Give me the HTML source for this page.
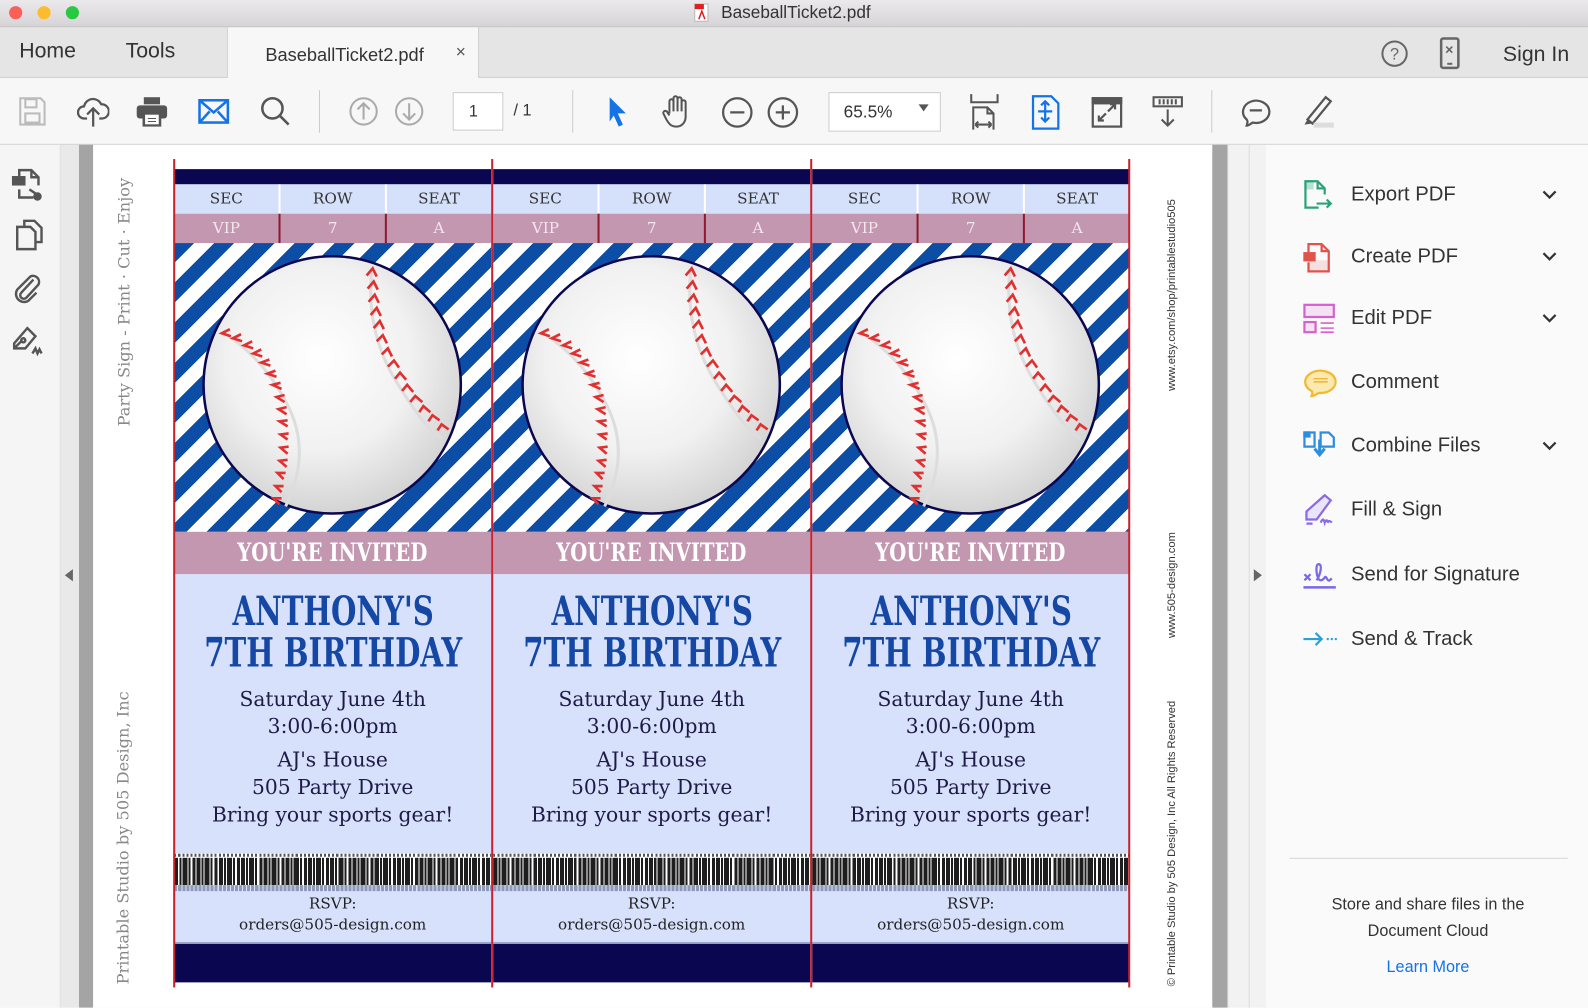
<!DOCTYPE html>
<html><head><meta charset="utf-8"><style>
*{margin:0;padding:0;box-sizing:border-box}
html,body{width:1588px;height:1008px;overflow:hidden;background:#fafafa}
#w{position:absolute;left:0;top:0;width:1568px;height:995px;transform:scale(1.01276);transform-origin:0 0;font-family:"Liberation Sans",sans-serif;overflow:hidden}
.a{position:absolute}
.title{left:0;top:0;width:1568px;height:27px;background:linear-gradient(#ebe9eb,#d6d4d6);border-bottom:1px solid #bdbdbd}
.dot{width:13px;height:13px;border-radius:50%;top:6px}
.tabs{left:0;top:27px;width:1568px;height:50px;background:#e5e5e5;border-bottom:1px solid #cfcfcf}
.tb{left:0;top:77px;width:1568px;height:66px;background:#f7f7f7;border-bottom:1px solid #d0d0d0}
.ic{position:absolute}
.side{left:0;top:143px;width:60px;height:852px;background:#f5f5f5;border-right:1px solid #ddd}
.page{left:92px;top:143px;width:1105px;height:852px;background:#fff}
.tk{position:absolute;top:167px;width:313px}
.navy{background:#0b0650}
.hdr{display:flex;height:29px;background:#d5e0fb;font-family:"DejaVu Serif","Liberation Serif",serif;font-size:15px;color:#333}
.hdr div,.val div{flex:1;text-align:center;line-height:29px}
.hdr div+div{border-left:2px solid #fff}
.val{display:flex;height:29px;background:#c497b0;font-family:"DejaVu Serif",serif;font-size:15px;color:#f3e6ee}
.val div+div{border-left:2px solid #8d1b2e}
.str{height:285px;background:repeating-linear-gradient(135deg,#0c4ea6 0 14px,#fff 14px 28px);position:relative;overflow:hidden}
.inv{height:42px;background:#c497b0;color:#fff;text-align:center;font-family:"DejaVu Serif Condensed","DejaVu Serif",serif;font-weight:bold;font-size:25px;line-height:42px;white-space:nowrap}
.inv span{display:inline-block;transform:scaleX(.86)}
.body{height:276px;background:#d7e1fb;text-align:center;color:#1e1a48;font-family:"DejaVu Serif","Liberation Serif",serif;overflow:hidden}
.h1{font-family:"DejaVu Serif Condensed","DejaVu Serif",serif;font-weight:bold;color:#1547a5;font-size:40px;line-height:41px;padding-top:16px;width:440px;margin-left:-63px;white-space:nowrap;transform:scaleX(.8)}
.t{font-size:20px;line-height:27px;white-space:nowrap}
.bar{height:37px;background:#fff;position:relative}
.rs{height:52px;background:#d7e1fb;text-align:center;font-family:"DejaVu Serif",serif;font-size:15px;color:#222;line-height:21px;padding-top:2px;border-bottom:2px solid #9da8cf}
.rl{position:absolute;top:157px;width:2px;height:818px;background:#c8202c}
.vt{position:absolute;white-space:nowrap;transform-origin:0 0;transform:rotate(-90deg);font-family:"DejaVu Serif",serif;color:#888;font-size:16px}
.vs{position:absolute;white-space:nowrap;transform-origin:0 0;transform:rotate(-90deg);font-family:"Liberation Sans",sans-serif;color:#333;font-size:11px}
.rp{left:1250px;top:143px;width:318px;height:852px;background:#fafafa}
.it{position:absolute;left:84px;font-size:20px;color:#333}
.chev{position:absolute;left:272px}
.bc{position:absolute;left:0;top:4px;width:313px;height:27px;background:repeating-linear-gradient(90deg,#1e1e1e 0 4px,#fff 4px 5px,#1e1e1e 5px 7px,#fff 7px 8px,#1e1e1e 8px 13px,#fff 13px 14px,#1e1e1e 14px 16px,#fff 16px 18px,#1e1e1e 18px 21px,#fff 21px 22px)}
</style></head><body><div id="w">
<div class="a title">
<div class="a dot" style="left:9px;background:#fc5f57"></div>
<div class="a dot" style="left:37px;background:#fdbc2e"></div>
<div class="a dot" style="left:65px;background:#28c840"></div>
<svg class="a" style="left:684px;top:3px" width="18" height="20"><rect x="2" y="1" width="13" height="17" fill="#fff" stroke="#bbb"/><rect x="2" y="1" width="9" height="5" fill="#e02020"/><path d="M6 16 L9 8 L12 16" stroke="#e02020" fill="none" stroke-width="1.5"/></svg>
<div class="a" style="left:712px;top:3px;font-size:17px;color:#333">BaseballTicket2.pdf</div>
</div>
<div class="a tabs">
<div class="a" style="left:19px;top:12px;font-size:21px;color:#333">Home</div>
<div class="a" style="left:124px;top:12px;font-size:21px;color:#333">Tools</div>
<div class="a" style="left:224px;top:0;width:249px;height:51px;background:#f7f7f7;border-left:1px solid #d0d0d0;border-right:1px solid #d0d0d0"></div>
<div class="a" style="left:262px;top:17px;font-size:18px;color:#333">BaseballTicket2.pdf</div>
<div class="a" style="left:450px;top:15px;font-size:17px;color:#555">×</div>
<svg class="a" style="left:1363px;top:12px" width="28" height="28"><circle cx="14" cy="14" r="12" fill="none" stroke="#666" stroke-width="2"/><text x="14" y="20" text-anchor="middle" font-size="16" fill="#666" font-family="Liberation Sans">?</text></svg>
<svg class="a" style="left:1421px;top:9px" width="22" height="34"><rect x="2" y="2" width="17" height="29" rx="2" fill="none" stroke="#666" stroke-width="2.5"/><path d="M7 10l6 6M13 10l-6 6" stroke="#666" stroke-width="1.6"/><rect x="8" y="26" width="5" height="2" fill="#666"/></svg>
<div class="a" style="left:1484px;top:15px;font-size:21px;color:#333">Sign In</div>
</div>
<div class="a tb">
<svg class="ic" style="left:18px;top:18px" width="28" height="30"><path d="M2 2h20l4 4v22H2z" fill="none" stroke="#bbb" stroke-width="2"/><rect x="7" y="3" width="11" height="8" fill="none" stroke="#bbb" stroke-width="2"/><rect x="7" y="17" width="14" height="9" fill="none" stroke="#bbb" stroke-width="2"/></svg>
<svg class="ic" style="left:76px;top:16px" width="32" height="34" fill="none" stroke="#555" stroke-width="2.2"><path d="M10 24H7a6 6 0 0 1 0-12 9 9 0 0 1 17-2 7 7 0 0 1 1 14h-3"/><path d="M16 32V15M10 20l6-6 6 6"/></svg>
<svg class="ic" style="left:134px;top:18px" width="32" height="30"><rect x="8" y="1" width="16" height="7" fill="#555"/><rect x="1" y="9" width="30" height="13" rx="3" fill="#555"/><rect x="8" y="17" width="16" height="12" fill="#fff" stroke="#555" stroke-width="2.5"/><path d="M12 22h8M12 25h8" stroke="#555"/></svg>
<svg class="ic" style="left:195px;top:20px" width="32" height="26" fill="none" stroke="#1473e6" stroke-width="2.5"><rect x="2" y="2" width="28" height="22"/><path d="M2 2l14 12 14-12M2 24l10-11M30 24l-10-11"/></svg>
<svg class="ic" style="left:256px;top:17px" width="32" height="32" fill="none" stroke="#555" stroke-width="2.5"><circle cx="13" cy="13" r="10"/><path d="M20 20l9 9"/></svg>
<div class="a" style="left:315px;top:12px;width:1px;height:42px;background:#ccc"></div>
<svg class="ic" style="left:344px;top:18px" width="30" height="30" fill="none" stroke="#aaa" stroke-width="2"><circle cx="15" cy="15" r="13"/><path d="M15 23V8M9 13l6-6 6 6"/></svg>
<svg class="ic" style="left:389px;top:18px" width="30" height="30" fill="none" stroke="#aaa" stroke-width="2"><circle cx="15" cy="15" r="13"/><path d="M15 7v15M9 17l6 6 6-6"/></svg>
<div class="a" style="left:447px;top:14px;width:50px;height:38px;background:#fff;border:1px solid #ccc;font-size:16px;color:#333;padding:10px 0 0 15px">1</div>
<div class="a" style="left:507px;top:24px;font-size:16px;color:#333">/ 1</div>
<div class="a" style="left:565px;top:12px;width:1px;height:42px;background:#ccc"></div>
<svg class="ic" style="left:598px;top:17px" width="24" height="32"><path d="M4 2l16 16h-8l5 11-4 2-5-11-4 6z" fill="#1473e6"/></svg>
<svg class="ic" style="left:652px;top:15px" width="34" height="36" fill="none" stroke="#555" stroke-width="2"><path d="M9 20V8a2 2 0 0 1 4 0v10V5a2 2 0 0 1 4 0v13V6a2 2 0 0 1 4 0v12V9a2 2 0 0 1 4 0v14c0 6-4 10-9 10s-7-2-10-7l-3-6a2 2 0 0 1 4-1l2 3"/></svg>
<svg class="ic" style="left:712px;top:18px" width="32" height="32" fill="none" stroke="#555" stroke-width="2.2"><circle cx="16" cy="16" r="14"/><path d="M9 16h14"/></svg>
<svg class="ic" style="left:757px;top:18px" width="32" height="32" fill="none" stroke="#555" stroke-width="2.2"><circle cx="16" cy="16" r="14"/><path d="M9 16h14M16 9v14"/></svg>
<div class="a" style="left:818px;top:14px;width:111px;height:39px;background:#fff;border:1px solid #ccc;font-size:17px;color:#333;padding:9px 0 0 14px">65.5%</div>
<div class="a" style="left:907px;top:26px;width:0;height:0;border-left:5px solid transparent;border-right:5px solid transparent;border-top:7px solid #555"></div>
<svg class="ic" style="left:957px;top:15px" width="30" height="38" fill="none" stroke="#555" stroke-width="2"><path d="M2 1v8h26V1M4 36V14h14l6 6v16M18 14v6h6M6 31h16M6 31l3-3M6 31l3 3M22 31l-3-3M22 31l-3 3"/></svg>
<svg class="ic" style="left:1018px;top:16px" width="30" height="36" fill="none" stroke="#1473e6" stroke-width="2.2"><path d="M2 2h18l7 7v25H2z"/><path d="M14 7v20M10 11l4-4 4 4M10 23l4 4 4-4M7 17h14"/></svg>
<svg class="ic" style="left:1077px;top:18px" width="32" height="32" fill="none" stroke="#555" stroke-width="2.2"><rect x="2" y="2" width="28" height="28"/><rect x="2" y="2" width="28" height="5" fill="#555"/><path d="M17 15l7-7M19 8h5v5M15 17l-7 7M8 19v5h5"/></svg>
<svg class="ic" style="left:1137px;top:17px" width="32" height="34" fill="none" stroke="#555" stroke-width="2"><rect x="2" y="2" width="28" height="9"/><path d="M8 4v5M12 4v5M16 4v5M20 4v5M24 4v5M16 14v16M10 24l6 6 6-6"/></svg>
<div class="a" style="left:1196px;top:12px;width:1px;height:42px;background:#ccc"></div>
<svg class="ic" style="left:1223px;top:17px" width="34" height="34" fill="none" stroke="#555" stroke-width="2.2"><path d="M8 30c1-3 1-5 0-6A13 11 0 1 1 14 27c-2 1-4 3-6 3z"/><path d="M11 15h12"/></svg>
<svg class="ic" style="left:1283px;top:15px" width="36" height="36"><path d="M8 26L26 4l5 4-18 22z" fill="none" stroke="#555" stroke-width="2.2"/><path d="M5 31l3-5 5 4z" fill="#555"/><rect x="14" y="29" width="20" height="5" fill="#ddd"/></svg>
</div>
<div class="a side">
<svg class="ic" style="left:11px;top:22px" width="32" height="34" fill="none" stroke="#555" stroke-width="2.4"><path d="M8 10V3h12l7 7v8M8 22v8h14"/><rect x="2" y="10" width="11" height="7" fill="#555"/><path d="M20 3v7h7M18 22l6 4"/><circle cx="26" cy="29" r="3" fill="#555"/></svg>
<svg class="ic" style="left:15px;top:73px" width="28" height="32" fill="none" stroke="#555" stroke-width="2.4"><path d="M9 7V2h10l7 7v14h-6"/><path d="M2 8h13l5 5v17H2z"/></svg>
<svg class="ic" style="left:12px;top:123px" width="30" height="34" fill="none" stroke="#555" stroke-width="2.4"><path d="M21 10L9 23a3.5 3.5 0 0 0 5 5L26 15a6 6 0 0 0-8-8L5 20a8 8 0 0 0 11 11l8-8"/></svg>
<svg class="ic" style="left:10px;top:176px" width="36" height="34" fill="none" stroke="#555" stroke-width="2.4"><path d="M17 5l8 8-10 12H4v-5z"/><path d="M4 25l8-8"/><circle cx="13" cy="17" r="2"/><path d="M22 30l3-5 2 5 2-4 2 4"/></svg>
</div>
<div class="a" style="left:60px;top:143px;width:18px;height:852px;background:#e9e9e9"></div>
<div class="a" style="left:64px;top:562px;width:0;height:0;border-top:6px solid transparent;border-bottom:6px solid transparent;border-right:8px solid #666"></div>
<div class="a" style="left:78px;top:143px;width:14px;height:852px;background:#a4a4a4"></div>
<div class="a page"></div>
<div class="a" style="left:1197px;top:143px;width:15px;height:852px;background:#a4a4a4"></div>
<div class="a" style="left:1212px;top:143px;width:38px;height:852px;background:#f2f2f2;border-left:1px solid #e0e0e0"></div>
<div class="a" style="left:1233px;top:143px;width:1px;height:852px;background:#dcdcdc"></div>
<div class="a" style="left:1238px;top:562px;width:0;height:0;border-top:6px solid transparent;border-bottom:6px solid transparent;border-left:8px solid #666"></div>
<div class="vt" style="left:113px;top:421px;font-size:16px">Party Sign - Print · Cut · Enjoy</div>
<div class="vt" style="left:112px;top:972px;font-size:16px">Printable Studio by 505 Design, Inc</div>
<div class="vs" style="left:1151px;top:386px">www.etsy.com/shop/printablestudio505</div>
<div class="vs" style="left:1151px;top:630px">www.505-design.com</div>
<div class="vs" style="left:1151px;top:974px">© Printable Studio by 505 Design, Inc All Rights Reserved</div>
<svg width="0" height="0" style="position:absolute"><defs>
<radialGradient id="bg" cx="45%" cy="40%" r="60%"><stop offset="0" stop-color="#fff"/><stop offset=".6" stop-color="#f1f1f1"/><stop offset="1" stop-color="#d4d4d4"/></radialGradient>
<symbol id="ball" viewBox="0 0 313 285"><circle cx="156" cy="140" r="127" fill="url(#bg)" stroke="#0b0650" stroke-width="2.5"/>
<path d="M48 88q40 25 64 72t-2 100" fill="none" stroke="#ddd" stroke-width="3"/>
<path d="M195 28q-6 60 25 110t45 55" fill="none" stroke="#ddd" stroke-width="3"/>
<g fill="none" stroke="#e03030" stroke-width="2.6">
<path d="M55 85l-8 4 9 3M66 90l-8 4 9 3M77 97l-8 4 9 3M86 105l-8 4 9 3M94 115l-8 3 9 3M100 126l-8 3 9 3M105 138l-8 2 9 4M109 150l-8 2 8 5M111 162l-8 2 8 5M112 175l-8 1 8 5M113 188l-8 1 7 5M113 201l-8 1 7 6M112 214l-8 1 7 6M110 227l-8 0 6 6M108 240l-8 0 6 6M106 252l-8 0 6 6"/>
<path d="M190 32l6-7 4 8M191 45l6-7 4 8M192 58l6-7 4 8M194 71l6-7 4 8M197 84l6-7 4 8M200 97l6-6 4 8M205 110l6-6 4 8M211 122l6-6 5 7M218 134l5-6 6 7M225 146l5-6 6 7M233 157l5-6 7 6M242 167l4-6 7 6M251 176l4-6 7 5M260 185l4-6 7 5"/>
</g></symbol></defs></svg>
<div class="tk" style="left:172px"><div class="navy" style="height:15px"></div><div class="hdr"><div>SEC</div><div>ROW</div><div>SEAT</div></div><div class="val"><div>VIP</div><div>7</div><div>A</div></div><div class="str"><svg width="313" height="285" style="position:absolute;left:0;top:0"><use href="#ball"/></svg></div><div class="inv"><span>YOU'RE INVITED</span></div><div class="body"><div class="h1">ANTHONY'S<br>7TH BIRTHDAY</div><div class="t" style="margin-top:12px">Saturday June 4th<br>3:00-6:00pm</div><div class="t" style="margin-top:6px">AJ's House<br>505 Party Drive<br>Bring your sports gear!</div></div><div class="bar"><div class="a" style="left:0;top:0;width:313px;height:3px;background:repeating-linear-gradient(90deg,#555 0 2px,#fff 2px 4px)"></div><div class="bc"></div><div class="a" style="left:0;top:31px;width:313px;height:6px;background:repeating-linear-gradient(90deg,#8f9ab8 0 3px,#d7e1fb 3px 4px)"></div></div><div class="rs">RSVP:<br>orders@505-design.com</div><div class="navy" style="height:38px"></div></div>
<div class="tk" style="left:487px"><div class="navy" style="height:15px"></div><div class="hdr"><div>SEC</div><div>ROW</div><div>SEAT</div></div><div class="val"><div>VIP</div><div>7</div><div>A</div></div><div class="str"><svg width="313" height="285" style="position:absolute;left:0;top:0"><use href="#ball"/></svg></div><div class="inv"><span>YOU'RE INVITED</span></div><div class="body"><div class="h1">ANTHONY'S<br>7TH BIRTHDAY</div><div class="t" style="margin-top:12px">Saturday June 4th<br>3:00-6:00pm</div><div class="t" style="margin-top:6px">AJ's House<br>505 Party Drive<br>Bring your sports gear!</div></div><div class="bar"><div class="a" style="left:0;top:0;width:313px;height:3px;background:repeating-linear-gradient(90deg,#555 0 2px,#fff 2px 4px)"></div><div class="bc"></div><div class="a" style="left:0;top:31px;width:313px;height:6px;background:repeating-linear-gradient(90deg,#8f9ab8 0 3px,#d7e1fb 3px 4px)"></div></div><div class="rs">RSVP:<br>orders@505-design.com</div><div class="navy" style="height:38px"></div></div>
<div class="tk" style="left:802px"><div class="navy" style="height:15px"></div><div class="hdr"><div>SEC</div><div>ROW</div><div>SEAT</div></div><div class="val"><div>VIP</div><div>7</div><div>A</div></div><div class="str"><svg width="313" height="285" style="position:absolute;left:0;top:0"><use href="#ball"/></svg></div><div class="inv"><span>YOU'RE INVITED</span></div><div class="body"><div class="h1">ANTHONY'S<br>7TH BIRTHDAY</div><div class="t" style="margin-top:12px">Saturday June 4th<br>3:00-6:00pm</div><div class="t" style="margin-top:6px">AJ's House<br>505 Party Drive<br>Bring your sports gear!</div></div><div class="bar"><div class="a" style="left:0;top:0;width:313px;height:3px;background:repeating-linear-gradient(90deg,#555 0 2px,#fff 2px 4px)"></div><div class="bc"></div><div class="a" style="left:0;top:31px;width:313px;height:6px;background:repeating-linear-gradient(90deg,#8f9ab8 0 3px,#d7e1fb 3px 4px)"></div></div><div class="rs">RSVP:<br>orders@505-design.com</div><div class="navy" style="height:38px"></div></div>
<div class="rl" style="left:171px"></div><div class="rl" style="left:485px"></div><div class="rl" style="left:800px"></div><div class="rl" style="left:1114px"></div>
<div class="a rp">
<svg class="ic" style="left:36px;top:34px" width="32" height="32" fill="none" stroke="#2aa37a" stroke-width="2.2"><path d="M16 28H3V2h12l7 7v6"/><path d="M15 2v7h7" /><rect x="3" y="2" width="7" height="7" fill="#2aa37a" opacity=".3"/><path d="M14 24h14M24 20l4 4-4 4"/></svg>
<div class="it" style="top:38px">Export PDF</div>
<svg class="chev" style="top:44px" width="16" height="10"><path d="M2 2l6 6 6-6" fill="none" stroke="#333" stroke-width="2.2"/></svg>
<svg class="ic" style="left:36px;top:96px" width="32" height="32" fill="none" stroke="#e0524a" stroke-width="2.2"><path d="M6 12V2h13l7 7v20H6v-9"/><path d="M19 2v7h7"/><rect x="2" y="11" width="10" height="7" fill="#e0524a"/><rect x="6" y="18" width="20" height="11" fill="#e0524a" opacity=".15" stroke="none"/></svg>
<div class="it" style="top:99px">Create PDF</div>
<svg class="chev" style="top:105px" width="16" height="10"><path d="M2 2l6 6 6-6" fill="none" stroke="#333" stroke-width="2.2"/></svg>
<svg class="ic" style="left:36px;top:156px" width="34" height="32" fill="none" stroke="#d660d0" stroke-width="2.2"><rect x="2" y="2" width="29" height="12" fill="#d660d0" fill-opacity=".15"/><rect x="2" y="19" width="11" height="10" fill="#d660d0" fill-opacity=".15"/><path d="M18 20h13M18 25h13M18 29h13" stroke-width="1.5"/></svg>
<div class="it" style="top:160px">Edit PDF</div>
<svg class="chev" style="top:166px" width="16" height="10"><path d="M2 2l6 6 6-6" fill="none" stroke="#333" stroke-width="2.2"/></svg>
<svg class="ic" style="left:36px;top:219px" width="34" height="32"><path d="M9 29c1-2 1-4 0-5A15 11 0 1 1 16 26c-2 1-4 3-7 3z" fill="#fce9b0" stroke="#f2b935" stroke-width="2.2"/><path d="M11 12h14M11 15h14" stroke="#f2b935" stroke-width="1.5"/></svg>
<div class="it" style="top:223px">Comment</div>
<svg class="ic" style="left:36px;top:281px" width="34" height="34" fill="none" stroke="#2d8ee0" stroke-width="2.2"><path d="M2 3h10v14H2zM18 3h8l5 5v9H18z"/><rect x="2" y="3" width="5" height="4" fill="#2d8ee0"/><path d="M17 10v14M12 19l5 6 5-6" stroke-width="3"/></svg>
<div class="it" style="top:286px">Combine Files</div>
<svg class="chev" style="top:292px" width="16" height="10"><path d="M2 2l6 6 6-6" fill="none" stroke="#333" stroke-width="2.2"/></svg>
<svg class="ic" style="left:36px;top:344px" width="36" height="34" fill="none" stroke="#8a6ae8" stroke-width="2.2"><path d="M22 2l6 5-14 19H4v-8z" fill="#8a6ae8" fill-opacity=".15"/><path d="M4 30h6M18 29c2-4 3-4 4 0 1-3 3-3 3 0 1-2 2-2 4 0"/></svg>
<div class="it" style="top:349px">Fill &amp; Sign</div>
<svg class="ic" style="left:36px;top:410px" width="36" height="30" fill="none" stroke="#7a68e6" stroke-width="2.2"><path d="M2 14l6 6M8 14l-6 6M14 20c4-6 6-16 2-16s-2 16 2 16 4-6 6-2 3 2 5 0"/><path d="M1 27h32" stroke-width="2.5"/></svg>
<div class="it" style="top:413px">Send for Signature</div>
<svg class="ic" style="left:36px;top:478px" width="36" height="20" fill="none" stroke="#2aa0d8" stroke-width="2.2"><path d="M1 10h18M13 4l6 6-6 6"/><path d="M24 10h2M28 10h2M32 10h2" stroke-width="2"/></svg>
<div class="it" style="top:477px">Send &amp; Track</div>
<div class="a" style="left:23px;top:704px;width:275px;height:1px;background:#d5d5d5"></div>
<div class="a" style="left:0;top:738px;width:320px;text-align:center;font-size:16px;line-height:26px;color:#333">Store and share files in the<br>Document Cloud</div>
<div class="a" style="left:0;top:804px;width:320px;text-align:center;font-size:16px;color:#1473e6">Learn More</div>
</div>
</div></body></html>
